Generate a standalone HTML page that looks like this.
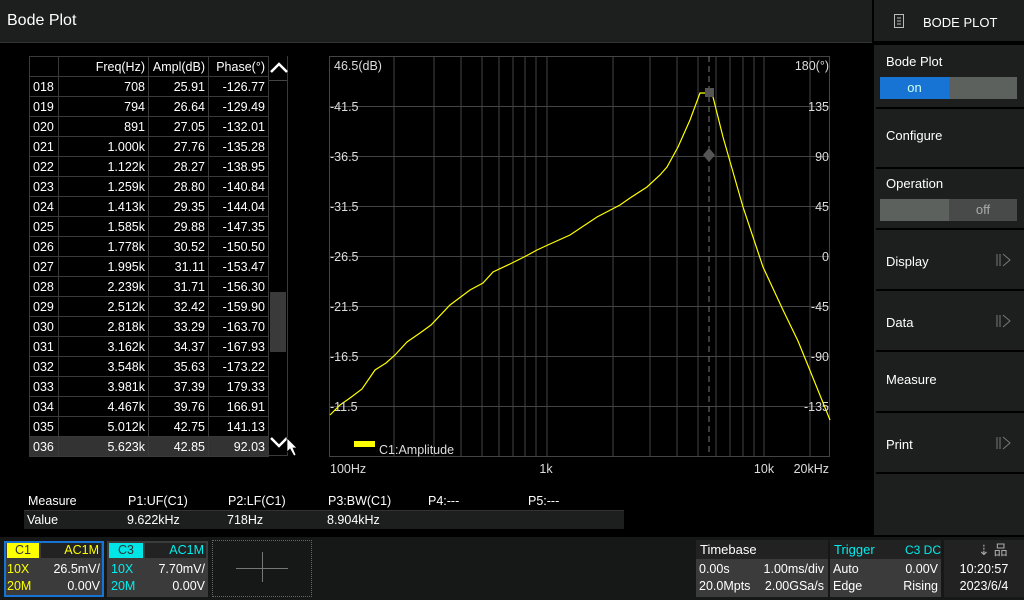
<!DOCTYPE html>
<html><head><meta charset="utf-8"><style>
*{margin:0;padding:0;box-sizing:border-box}
body{width:1024px;height:600px;background:#000;font-family:"Liberation Sans","DejaVu Sans",sans-serif;color:#fff;position:relative;overflow:hidden;font-size:13px}
.a{position:absolute}
table{border-collapse:collapse;position:absolute;left:29px;top:56px}
td{border:1px solid #3a3a3a;height:20px;font-size:12.5px;padding:0 3px;text-align:right;color:#fff}
td:first-child{text-align:left;width:29px}
.rp{position:absolute;left:874px;width:150px;background:#1c1f1e}
.sep{position:absolute;left:876px;width:148px;height:2px;background:#000}
.lbl{position:absolute;left:886px;font-size:13px}
.arr{position:absolute;left:996px}
.ch{position:absolute;top:541px;height:56px;background:#3b3b3b;font-size:12.5px}
</style></head><body>
<div class="a" style="left:0;top:0;width:872px;height:43px;background:#1c1f1e;border-bottom:1px solid #333"></div>
<div class="a" style="left:7px;top:12px;font-size:16px">Bode Plot</div>

<table>
<tr><td></td><td style="width:90px">Freq(Hz)</td><td style="width:60px">Ampl(dB)</td><td style="width:60px">Phase(°)</td></tr>
<tr><td>018</td><td>708</td><td>25.91</td><td>-126.77</td></tr>
<tr><td>019</td><td>794</td><td>26.64</td><td>-129.49</td></tr>
<tr><td>020</td><td>891</td><td>27.05</td><td>-132.01</td></tr>
<tr><td>021</td><td>1.000k</td><td>27.76</td><td>-135.28</td></tr>
<tr><td>022</td><td>1.122k</td><td>28.27</td><td>-138.95</td></tr>
<tr><td>023</td><td>1.259k</td><td>28.80</td><td>-140.84</td></tr>
<tr><td>024</td><td>1.413k</td><td>29.35</td><td>-144.04</td></tr>
<tr><td>025</td><td>1.585k</td><td>29.88</td><td>-147.35</td></tr>
<tr><td>026</td><td>1.778k</td><td>30.52</td><td>-150.50</td></tr>
<tr><td>027</td><td>1.995k</td><td>31.11</td><td>-153.47</td></tr>
<tr><td>028</td><td>2.239k</td><td>31.71</td><td>-156.30</td></tr>
<tr><td>029</td><td>2.512k</td><td>32.42</td><td>-159.90</td></tr>
<tr><td>030</td><td>2.818k</td><td>33.29</td><td>-163.70</td></tr>
<tr><td>031</td><td>3.162k</td><td>34.37</td><td>-167.93</td></tr>
<tr><td>032</td><td>3.548k</td><td>35.63</td><td>-173.22</td></tr>
<tr><td>033</td><td>3.981k</td><td>37.39</td><td>179.33</td></tr>
<tr><td>034</td><td>4.467k</td><td>39.76</td><td>166.91</td></tr>
<tr><td>035</td><td>5.012k</td><td>42.75</td><td>141.13</td></tr>
<tr style="background:#333"><td>036</td><td>5.623k</td><td>42.85</td><td>92.03</td></tr>
</table>
<div class="a" style="left:268px;top:56px;width:20px;height:400px;border:1px solid #3a3a3a;border-top:none"></div>
<div class="a" style="left:269px;top:80px;width:18px;height:1px;background:#444"></div>
<div class="a" style="left:270px;top:292px;width:16px;height:60px;background:#3a3a3a"></div>
<svg class="a" style="left:266px;top:56px" width="40" height="410"><path d="M5 16 L13 8 L21 16" stroke="#fff" stroke-width="2.5" fill="none"/><path d="M5 382 L13 390 L21 382" stroke="#fff" stroke-width="2.5" fill="none"/><path d="M21 382 L21 396 L24 393 L28 400 L30 399 L27 392 L31 392 Z" fill="#fff" stroke="#000" stroke-width="0.7"/></svg>

<svg class="a" style="left:320px;top:50px" width="520" height="430">
<g stroke="#444" stroke-width="1">
<rect x="9.5" y="6.5" width="500" height="400" fill="none"/>
<line x1="9" x2="509" y1="56.5" y2="56.5"/><line x1="9" x2="509" y1="106.5" y2="106.5"/><line x1="9" x2="509" y1="156.5" y2="156.5"/><line x1="9" x2="509" y1="206.5" y2="206.5"/><line x1="9" x2="509" y1="256.5" y2="256.5"/><line x1="9" x2="509" y1="306.5" y2="306.5"/><line x1="9" x2="509" y1="356.5" y2="356.5"/>
<line x1="74" x2="74" y1="6" y2="406"/><line x1="114" x2="114" y1="6" y2="406"/><line x1="141" x2="141" y1="6" y2="406"/><line x1="162" x2="162" y1="6" y2="406"/><line x1="179" x2="179" y1="6" y2="406"/><line x1="193" x2="193" y1="6" y2="406"/><line x1="205" x2="205" y1="6" y2="406"/><line x1="216" x2="216" y1="6" y2="406"/><line x1="227" x2="227" y1="6" y2="406"/>
<line x1="293" x2="293" y1="6" y2="406"/><line x1="330" x2="330" y1="6" y2="406"/><line x1="357" x2="357" y1="6" y2="406"/><line x1="378" x2="378" y1="6" y2="406"/><line x1="396" x2="396" y1="6" y2="406"/><line x1="410" x2="410" y1="6" y2="406"/><line x1="423" x2="423" y1="6" y2="406"/><line x1="434" x2="434" y1="6" y2="406"/><line x1="444" x2="444" y1="6" y2="406"/>
<line x1="490" x2="490" y1="6" y2="406"/>
</g>
<line x1="389" x2="389" y1="6" y2="406" stroke="#777" stroke-dasharray="6,4"/>
<polyline fill="none" stroke="#ffff00" stroke-width="1.2" points="10,365 20,355 30,348 42,339 55,320 66,313 75,305 87,292 100,283 111,275 130,255 150,240 163,233 173,222 190,214 206,206 217,200 230,194 250,185 277,167 300,155 310,148 327,137 340,125 347,117 358,97 370,70 380,43 392,43 403,87 423,157 443,217 463,260 478,291 489,318 510,370"/>
<rect x="385" y="38" width="9" height="9" fill="#555"/>
<path d="M389 98 L395 105 L389 112 L383 105 Z" fill="#555"/>
<rect x="34" y="391" width="21" height="6" fill="#ffff00"/>
<g fill="#ddd" font-size="12.5" font-family="Liberation Sans,sans-serif">
<text x="14" y="20">46.5(dB)</text><text x="509" y="20" text-anchor="end">180(°)</text>
<text x="10" y="61">-41.5</text><text x="10" y="111">-36.5</text><text x="10" y="161">-31.5</text><text x="10" y="211">-26.5</text><text x="10" y="261">-21.5</text><text x="10" y="311">-16.5</text><text x="10" y="361">-11.5</text>
<text x="509" y="61" text-anchor="end">135</text><text x="509" y="111" text-anchor="end">90</text><text x="509" y="161" text-anchor="end">45</text><text x="509" y="211" text-anchor="end">0</text><text x="509" y="261" text-anchor="end">-45</text><text x="509" y="311" text-anchor="end">-90</text><text x="509" y="361" text-anchor="end">-135</text>
<text x="59" y="404">C1:Amplitude</text>
<text x="10" y="423">100Hz</text><text x="226" y="423" text-anchor="middle">1k</text><text x="444" y="423" text-anchor="middle">10k</text><text x="509" y="423" text-anchor="end">20kHz</text>
</g>
</svg>

<div class="a" style="left:28px;top:494px;font-size:12.5px">Measure</div>
<div class="a" style="left:128px;top:494px;font-size:12.5px">P1:UF(C1)</div>
<div class="a" style="left:228px;top:494px;font-size:12.5px">P2:LF(C1)</div>
<div class="a" style="left:328px;top:494px;font-size:12.5px">P3:BW(C1)</div>
<div class="a" style="left:428px;top:494px;font-size:12.5px">P4:---</div>
<div class="a" style="left:528px;top:494px;font-size:12.5px">P5:---</div>
<div class="a" style="left:24px;top:510px;width:600px;height:19px;background:#1c1f1e;border-top:1px solid #333"></div>
<div class="a" style="left:27px;top:513px;font-size:12.5px">Value</div>
<div class="a" style="left:127px;top:513px;font-size:12.5px">9.622kHz</div>
<div class="a" style="left:227px;top:513px;font-size:12.5px">718Hz</div>
<div class="a" style="left:327px;top:513px;font-size:12.5px">8.904kHz</div>

<div class="rp" style="top:0;height:43px;border-bottom:2px solid #000"></div>
<svg class="a" style="left:893px;top:13px" width="12" height="16"><rect x="1.5" y="1.5" width="9" height="13" fill="none" stroke="#bbb"/><path d="M4 5h4M4 8h4M4 11h4" stroke="#bbb"/></svg>
<div class="a" style="left:923px;top:15px;font-size:13px">BODE PLOT</div>
<div class="rp" style="top:45px;height:490px"></div>
<div class="sep" style="top:107px"></div><div class="sep" style="top:167px"></div><div class="sep" style="top:228px"></div><div class="sep" style="top:289px"></div><div class="sep" style="top:350px"></div><div class="sep" style="top:411px"></div><div class="sep" style="top:472px"></div>
<div class="lbl" style="top:54px">Bode Plot</div>
<div class="a" style="left:880px;top:77px;width:69px;height:22px;background:#1874d4;text-align:center;line-height:22px;color:#cfe">on</div>
<div class="a" style="left:949px;top:77px;width:68px;height:22px;background:#5d615e"></div>
<div class="lbl" style="top:128px">Configure</div>
<div class="lbl" style="top:176px">Operation</div>
<div class="a" style="left:880px;top:199px;width:69px;height:22px;background:#5d615e"></div>
<div class="a" style="left:949px;top:199px;width:68px;height:22px;background:#484a49;text-align:center;line-height:22px;color:#aaa">off</div>
<div class="lbl" style="top:254px">Display</div>
<svg class="arr" style="top:253px" width="16" height="14"><path d="M1 1v12M4 1v12M7 1l7 6-7 6" stroke="#777" fill="none"/></svg>
<div class="lbl" style="top:315px">Data</div>
<svg class="arr" style="top:314px" width="16" height="14"><path d="M1 1v12M4 1v12M7 1l7 6-7 6" stroke="#777" fill="none"/></svg>
<div class="lbl" style="top:372px">Measure</div>
<div class="lbl" style="top:437px">Print</div>
<svg class="arr" style="top:436px" width="16" height="14"><path d="M1 1v12M4 1v12M7 1l7 6-7 6" stroke="#777" fill="none"/></svg>

<div class="a" style="left:0;top:537px;width:1024px;height:63px;background:#151816"></div>
<div class="ch" style="left:4px;width:100px;border:2px solid #1874d4"></div>
<div class="a" style="left:7px;top:543px;width:32px;height:15px;background:#ffff00;color:#333;font-size:12.5px;text-align:center">C1</div>
<div class="a" style="left:41px;top:543px;width:60px;height:15px;background:#222;color:#ff0;font-size:12.5px;text-align:right;padding-right:2px">AC1M</div>
<div class="a" style="left:7px;top:562px;color:#ff0;font-size:12.5px">10X</div><div class="a" style="left:7px;top:579px;color:#ff0;font-size:12.5px">20M</div>
<div class="a" style="left:50px;top:562px;width:50px;text-align:right;font-size:12.5px">26.5mV/</div><div class="a" style="left:50px;top:579px;width:50px;text-align:right;font-size:12.5px">0.00V</div>
<div class="ch" style="left:107px;width:101px"></div>
<div class="a" style="left:109px;top:543px;width:34px;height:15px;background:#00e5e5;color:#333;font-size:12.5px;text-align:center">C3</div>
<div class="a" style="left:145px;top:543px;width:61px;height:15px;background:#222;color:#0ee;font-size:12.5px;text-align:right;padding-right:2px">AC1M</div>
<div class="a" style="left:111px;top:562px;color:#0ee;font-size:12.5px">10X</div><div class="a" style="left:111px;top:579px;color:#0ee;font-size:12.5px">20M</div>
<div class="a" style="left:150px;top:562px;width:55px;text-align:right;font-size:12.5px">7.70mV/</div><div class="a" style="left:150px;top:579px;width:55px;text-align:right;font-size:12.5px">0.00V</div>
<div class="a" style="left:212px;top:540px;width:100px;height:57px;border:1px dotted #666"></div>
<div class="a" style="left:236px;top:568px;width:52px;height:1px;background:#777"></div>
<div class="a" style="left:262px;top:552px;width:1px;height:30px;background:#777"></div>

<div class="a" style="left:696px;top:540px;width:132px;height:57px;background:#3b3b3b"></div>
<div class="a" style="left:696px;top:540px;width:132px;height:19px;background:#222"></div>
<div class="a" style="left:700px;top:542px;font-size:13px">Timebase</div>
<div class="a" style="left:699px;top:562px;font-size:12.5px">0.00s</div><div class="a" style="left:750px;top:562px;width:74px;text-align:right;font-size:12.5px">1.00ms/div</div>
<div class="a" style="left:699px;top:579px;font-size:12.5px">20.0Mpts</div><div class="a" style="left:750px;top:579px;width:74px;text-align:right;font-size:12.5px">2.00GSa/s</div>
<div class="a" style="left:830px;top:540px;width:111px;height:57px;background:#3b3b3b"></div>
<div class="a" style="left:830px;top:540px;width:111px;height:19px;background:#222"></div>
<div class="a" style="left:834px;top:542px;font-size:13px;color:#0ee">Trigger</div>
<div class="a" style="left:905px;top:543px;font-size:12px;color:#0ee">C3 DC</div>
<div class="a" style="left:833px;top:562px;font-size:12.5px">Auto</div><div class="a" style="left:880px;top:562px;width:58px;text-align:right;font-size:12.5px">0.00V</div>
<div class="a" style="left:833px;top:579px;font-size:12.5px">Edge</div><div class="a" style="left:880px;top:579px;width:58px;text-align:right;font-size:12.5px">Rising</div>
<div class="a" style="left:944px;top:540px;width:80px;height:57px;background:#222"></div>
<div class="a" style="left:978px;top:540px;color:#aaa;font-size:14px">⇣ 品</div>
<div class="a" style="left:944px;top:562px;width:80px;text-align:center;font-size:12.5px">10:20:57</div>
<div class="a" style="left:944px;top:579px;width:80px;text-align:center;font-size:12.5px">2023/6/4</div>
</body></html>
